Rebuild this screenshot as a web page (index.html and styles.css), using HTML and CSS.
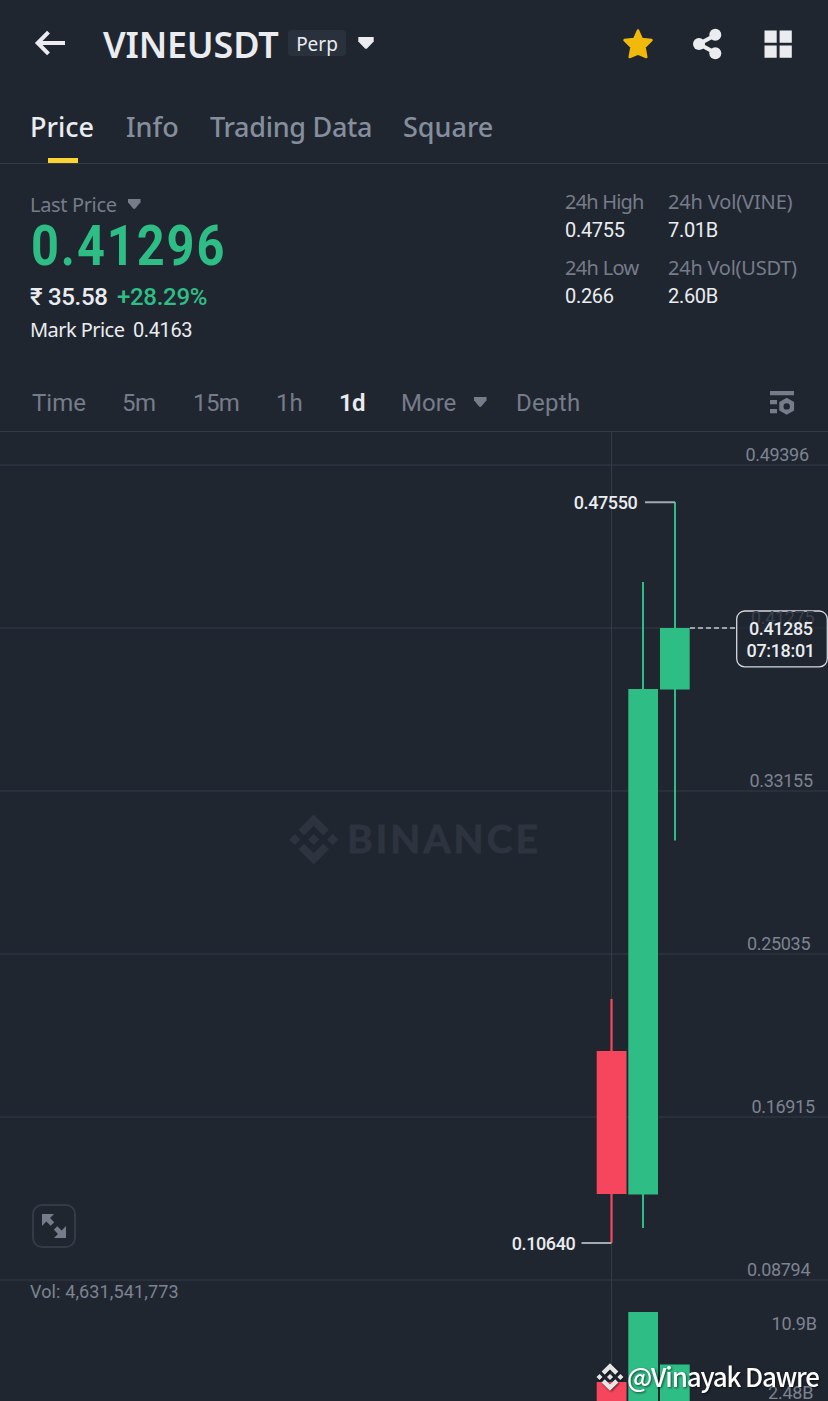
FILE: index.html
```html
<!DOCTYPE html>
<html lang="en">
<head>
<meta charset="utf-8">
<title>VINEUSDT Perp</title>
<link rel="stylesheet" href="styles.css">
</head>
<body>
<header class="header">
  <svg class="back" width="32" height="26" viewBox="0 0 32 26"><path d="M14.5 2.2 3.7 13l10.800 10.800M3 13h28" fill="none" stroke="#eaecef" stroke-width="4"/></svg>
  <h1 class="title">VINEUSDT</h1>
  <span class="badge">Perp</span>
  <svg class="caret-lg" width="16" height="12" viewBox="0 0 16 12"><path d="M.3 0h15.400v4.500L9 11.400q-1 .8-2 0L.3 4.500z" fill="#eaecef"/></svg>
  <div class="actions">
    <svg width="32" height="32" viewBox="0 0 32 32"><path d="M16 2.500 19.800 11l9.700 1.100-7 7L24.300 29 16 25.600 7.700 29l1.800-9.900-7-7L12.200 11z" fill="#f0b90b" stroke="#f0b90b" stroke-width="2.500" stroke-linejoin="round"/></svg>
    <svg width="32" height="32" viewBox="0 0 32 32"><path d="M23.500 7 7 16l16.500 9" fill="none" stroke="#eaecef" stroke-width="4"/><g fill="#eaecef"><circle cx="23.300" cy="6.800" r="6"/><circle cx="7" cy="16" r="6"/><circle cx="23.300" cy="25.200" r="6"/></g></svg>
    <svg width="32" height="32" viewBox="0 0 32 32"><path d="M2.500 2.500h12.200v12.200H2.500zM17.600 2.500h12.200v12.200H17.600zM2.500 17.600h12.200v12.200H2.500zM17.600 17.600h12.200v12.200H17.600z" fill="#eaecef"/></svg>
  </div>
</header>
<nav class="tabs">
  <span class="tab tab-price active">Price</span>
  <span class="tab tab-info">Info</span>
  <span class="tab tab-data">Trading Data</span>
  <span class="tab tab-square">Square</span>
</nav>
<section class="quote">
  <div class="quote-main">
    <div class="last-label"><span>Last Price</span><svg width="13" height="11" viewBox="0 0 13 11"><path d="M0 0h12.500v3.200L7.300 9.600q-1.100.9-2.200 0L0 3.200z" fill="#767c8a"/></svg></div>
    <div class="last-price">0.41296</div>
    <div class="change"><span class="fiat">₹ 35.58</span><span class="percent">+28.29%</span></div>
    <div class="mark"><span class="mark-label">Mark Price</span><span class="mark-value">0.4163</span></div>
  </div>
  <dl class="stats">
    <div class="stat"><dt class="s1">24h High</dt><dd>0.4755</dd></div>
    <div class="stat"><dt class="s2">24h Vol(VINE)</dt><dd>7.01B</dd></div>
    <div class="stat"><dt class="s3">24h Low</dt><dd>0.266</dd></div>
    <div class="stat"><dt class="s4">24h Vol(USDT)</dt><dd>2.60B</dd></div>
  </dl>
</section>
<nav class="intervals">
  <span class="i-time">Time</span>
  <span class="i-5m">5m</span>
  <span class="i-15m">15m</span>
  <span class="i-1h">1h</span>
  <span class="i-1d">1d</span>
  <span class="i-more">More</span>
  <svg class="i-caret" width="13" height="11" viewBox="0 0 13 11"><path d="M0 0h12.500v3.200L7.300 9.600q-1.100.9-2.200 0L0 3.200z" fill="#767c8a"/></svg>
  <span class="i-depth">Depth</span>
  <svg class="i-settings" width="25" height="24" viewBox="0 0 25 24"><path d="M0 0h24v4.200H0zM0 9h7v4.200H0zM0 18h7v4.200H0z" fill="#767c8a"/><path fill-rule="evenodd" d="m16.700 6.800 7.400 4.200v8.500l-7.400 4.300-7.400-4.300V11zM16.700 12.200a3.200 3.200 0 1 0 0 6.400 3.200 3.200 0 0 0 0-6.400z" fill="#767c8a"/></svg>
</nav>
<svg class="chart" width="828" height="969" viewBox="0 432 828 969">
  <path class="grid" d="M0 465H828M0 628H828M0 791H828M0 954H828M0 1117H828M0 1280H828"/>
  <path class="cross" d="M611.500 432V1401"/>
  <g class="watermark">
    <path d="m313.700 814.500 15.200 15.200-5.600 5.700-9.600-9.600-9.600 9.600-5.600-5.700zM294.700 834l5.500 5.500-5.500 5.600-5.600-5.600zM332.800 834l5.500 5.500-5.500 5.600-5.600-5.600zM313.700 834l5.600 5.500-5.600 5.600-5.500-5.600zM304.100 843.700l9.600 9.600 9.600-9.600 5.600 5.600-15.200 15.200-15.200-15.200z"/>
    <text x="347" y="853.200" textLength="191">BINANCE</text>
  </g>
  <rect class="tag" x="736.700" y="611" width="90.600" height="55.800" rx="8"/>
  <g class="axis">
    <text x="745.500" y="461" textLength="63.500">0.49396</text>
    <text class="ghost" x="751" y="624" textLength="63.500">0.41275</text>
    <text x="749.500" y="787" textLength="63.500">0.33155</text>
    <text x="747" y="950" textLength="63.500">0.25035</text>
    <text x="751.500" y="1113" textLength="63.500">0.16915</text>
    <text x="747" y="1276" textLength="63.500">0.08794</text>
    <text x="771.500" y="1330" textLength="45.500">10.9B</text>
    <text x="768" y="1399" textLength="45.500">2.48B</text>
    <text x="30" y="1298" textLength="148.500">Vol: 4,631,541,773</text>
  </g>
  <g class="up">
    <path d="M642 582h2v646h-2zM628.300 689h29.700v505.500h-29.700zM674 502h2v338.500h-2zM660 628h29.700v61.500H660zM628.300 1312h29.700v89h-29.700zM660 1364.500h29.700V1401H660z"/>
  </g>
  <g class="down">
    <path d="M610.400 999h2.200v244h-2.200zM596.700 1051h29.800v143h-29.800zM596.700 1382h29.800v19h-29.800z"/>
  </g>
  <path class="leader" d="M645 502.200H675M581.500 1243H611.500"/>
  <path class="dash" d="M690 628H736"/>
  <g class="values">
    <text x="573.700" y="509" textLength="64">0.47550</text>
    <text x="511.700" y="1250" textLength="64">0.10640</text>
    <text x="749" y="635" textLength="64">0.41285</text>
    <text x="746.500" y="657" textLength="68.500">07:18:01</text>
  </g>
  <rect class="expand-box" x="33" y="1205" width="42" height="42" rx="9"/>
  <path class="expand" d="M42 1214h12l-4 4 4.200 4.200-3.500 3.500-4.400-4.200L42 1226zM66 1238H54l4-4-4.200-4.200 3.500-3.500 4.400 4.200L66 1226z"/>
  <g class="credit">
    <path transform="translate(610 1377) scale(.55)" d="m0-25 15.200 15.200-5.600 5.700L0-13.700l-9.600 9.600-5.600-5.700zM-19-5.500l5.500 5.500-5.500 5.600L-24.600 0zM19-5.500l5.500 5.500-5.500 5.600L13.400 0zM0-5.500 5.600 0 0 5.600-5.500 0zM-9.600 4.200 0 13.800 9.600 4.200l5.600 5.600L0 25-15.200 9.800z"/>
    <text x="627" y="1386.500" textLength="193">@Vinayak Dawre</text>
  </g>
</svg>
</body>
</html>
```
FILE: styles.css
```css
* { box-sizing: border-box; }
body {
  margin: 0;
  width: 828px;
  background: #202630;
  color: #eaecef;
  font-family: "Noto Sans", sans-serif;
  white-space: nowrap;
  overflow-x: hidden;
}
svg { display: block; flex: none; }
.header { display: flex; align-items: center; height: 88px; padding: 0 34px; }
.back { margin-top: -2px; }
.title { width: 185px; margin: 1px 0 0 37px; font-size: 36px; line-height: 48px; font-weight: 600; letter-spacing: -.2px; }
.badge { width: 58px; height: 26px; margin-top: -2px; border-radius: 4px; background: #29313d; font-size: 19px; line-height: 29px; text-align: center; }
.caret-lg { margin: -3px 0 0 12px; }
.actions { display: flex; gap: 38px; margin-left: auto; }

.tabs { display: flex; height: 76px; padding-left: 30px; border-bottom: 1px solid #333b47; color: #848e9c; font-size: 27px; font-weight: 500; line-height: 78px; }
.tab { position: relative; }
.tab-price { width: 96px; }
.tab-info { width: 84px; }
.tab-data { width: 193px; letter-spacing: -.3px; }
.active { color: #eaecef; }
.active::after { content: ""; position: absolute; left: 18px; bottom: 0; width: 30px; height: 5px; background: #fcd535; }

.quote { display: flex; height: 210px; padding: 23px 0 0 30px; }
.quote-main { width: 535px; padding-top: 5px; }
.last-label { display: flex; align-items: center; gap: 11px; height: 24px; color: #767c8a; font-size: 20px; line-height: 26px; letter-spacing: -.35px; }
.last-label span { padding-top: 2px; }
.last-price { width: 230px; color: #2ebd85; font: 700 56px/60px Roboto, sans-serif; letter-spacing: 2.2px; transform: translateX(1px) scaleX(.87); transform-origin: left; }
.change { display: flex; margin-top: 5px; font: 500 24px/32px Roboto, sans-serif; letter-spacing: -.3px; }
.fiat { width: 87px; }
.percent { color: #2ebd85; }
.mark { display: flex; align-items: baseline; margin-top: 2px; font-size: 20px; line-height: 30px; }
.mark-label { width: 103px; letter-spacing: -.55px; }
.mark-value { font-family: Roboto, sans-serif; letter-spacing: -.4px; }
.stats { display: grid; grid-template-columns: 103px 140px; row-gap: 9px; align-content: start; margin: 0; font-size: 20px; }
.stat dt { color: #767c8a; line-height: 29px; }
.stat .s1 { letter-spacing: -.8px; }
.stat .s2 { letter-spacing: -.15px; }
.stat .s3 { letter-spacing: -.7px; }
.stat .s4 { letter-spacing: -.25px; }
.stat dd { margin: 0; font-family: Roboto, sans-serif; line-height: 28px; letter-spacing: -.3px; }

.intervals { display: flex; align-items: center; height: 58px; padding-left: 32px; border-bottom: 1px solid #333b47; color: #767c8a; font: 400 24px/58px Roboto, sans-serif; }
.intervals span { padding-top: 1px; }
.i-time { width: 90px; }
.i-5m { width: 71px; letter-spacing: -.5px; }
.i-15m { width: 83px; letter-spacing: -.6px; }
.i-1h { width: 63px; }
.i-1d { width: 62px; color: #eaecef; font-weight: 600; letter-spacing: -.6px; }
.i-more { width: 73px; }
.i-depth { width: 253px; margin-left: 29px; letter-spacing: .3px; }
.i-settings { margin-left: 1px; }

.chart text { font-family: Roboto, sans-serif; font-size: 18px; }
.grid { stroke: #29303d; stroke-width: 2; }
.cross { stroke: #343b47; stroke-width: 1; }
.axis { fill: #7d8390; }
.axis .ghost { fill: #3a414d; }
.up { fill: #2ebd85; }
.down { fill: #f6465d; }
.leader { stroke: #a4a8b2; stroke-width: 2; }
.dash { stroke: #c4c7cf; stroke-width: 1.500; stroke-dasharray: 5 3; }
.tag { fill: #202630; fill-opacity: .6; stroke: #d5d8df; stroke-width: 1.300; }
.values { fill: #eaecef; font-weight: 500; }
.watermark { fill: #2d343f; }
.chart .watermark text { font-family: Lato, sans-serif; font-size: 39px; font-weight: 700; stroke: #2d343f; stroke-width: .8; }
.expand-box { fill: none; stroke: #333b47; stroke-width: 2; }
.expand { fill: #767c8a; }
.credit { fill: #fff; filter: drop-shadow(1px 1px 1px rgba(0, 0, 0, .6)); }
.credit path { fill: #e6e6e6; }
.chart .credit text { font-family: "Noto Sans CJK SC", sans-serif; font-size: 26px; font-weight: 500; }
```
